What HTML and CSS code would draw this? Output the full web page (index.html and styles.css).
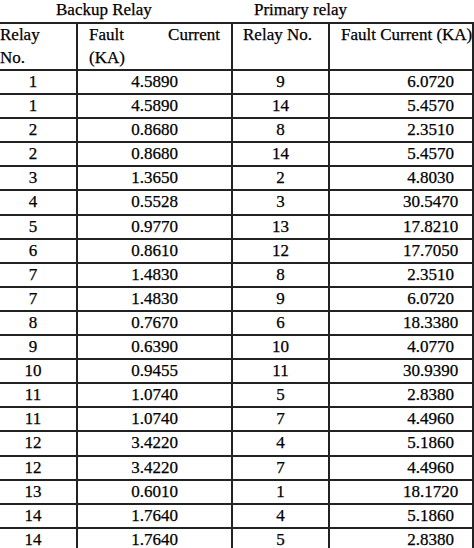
FILE: index.html
```html
<!DOCTYPE html>
<html>
<head>
<meta charset="utf-8">
<title>Backup and primary relay fault currents</title>
<link rel="stylesheet" href="styles.css">
</head>
<body>
<table class="relays">
  <colgroup>
    <col class="c1"><col class="c2"><col class="c3"><col class="c4">
  </colgroup>
  <thead>
    <tr class="title-row">
      <th colspan="2" class="title backup">Backup Relay</th>
      <th colspan="2" class="title primary">Primary relay</th>
    </tr>
    <tr class="head-row">
      <th class="h1">Relay<br>No.</th>
      <th class="h2"><div class="split"><span>Fault</span><span>Current</span></div><div>(KA)</div></th>
      <th class="h3">Relay No.</th>
      <th class="h4">Fault Current (KA)</th>
    </tr>
  </thead>
  <tbody>
    <tr><td class="d1">1</td><td class="d2">4.5890</td><td class="d3">9</td><td class="d4">6.0720</td></tr>
    <tr><td class="d1">1</td><td class="d2">4.5890</td><td class="d3">14</td><td class="d4">5.4570</td></tr>
    <tr><td class="d1">2</td><td class="d2">0.8680</td><td class="d3">8</td><td class="d4">2.3510</td></tr>
    <tr><td class="d1">2</td><td class="d2">0.8680</td><td class="d3">14</td><td class="d4">5.4570</td></tr>
    <tr><td class="d1">3</td><td class="d2">1.3650</td><td class="d3">2</td><td class="d4">4.8030</td></tr>
    <tr><td class="d1">4</td><td class="d2">0.5528</td><td class="d3">3</td><td class="d4">30.5470</td></tr>
    <tr><td class="d1">5</td><td class="d2">0.9770</td><td class="d3">13</td><td class="d4">17.8210</td></tr>
    <tr><td class="d1">6</td><td class="d2">0.8610</td><td class="d3">12</td><td class="d4">17.7050</td></tr>
    <tr><td class="d1">7</td><td class="d2">1.4830</td><td class="d3">8</td><td class="d4">2.3510</td></tr>
    <tr><td class="d1">7</td><td class="d2">1.4830</td><td class="d3">9</td><td class="d4">6.0720</td></tr>
    <tr><td class="d1">8</td><td class="d2">0.7670</td><td class="d3">6</td><td class="d4">18.3380</td></tr>
    <tr><td class="d1">9</td><td class="d2">0.6390</td><td class="d3">10</td><td class="d4">4.0770</td></tr>
    <tr><td class="d1">10</td><td class="d2">0.9455</td><td class="d3">11</td><td class="d4">30.9390</td></tr>
    <tr><td class="d1">11</td><td class="d2">1.0740</td><td class="d3">5</td><td class="d4">2.8380</td></tr>
    <tr><td class="d1">11</td><td class="d2">1.0740</td><td class="d3">7</td><td class="d4">4.4960</td></tr>
    <tr><td class="d1">12</td><td class="d2">3.4220</td><td class="d3">4</td><td class="d4">5.1860</td></tr>
    <tr><td class="d1">12</td><td class="d2">3.4220</td><td class="d3">7</td><td class="d4">4.4960</td></tr>
    <tr><td class="d1">13</td><td class="d2">0.6010</td><td class="d3">1</td><td class="d4">18.1720</td></tr>
    <tr><td class="d1">14</td><td class="d2">1.7640</td><td class="d3">4</td><td class="d4">5.1860</td></tr>
    <tr><td class="d1">14</td><td class="d2">1.7640</td><td class="d3">5</td><td class="d4">2.8380</td></tr>
  </tbody>
</table>
</body>
</html>
```

FILE: styles.css
```css
html, body {
  margin: 0;
  padding: 0;
  background: #ffffff;
  overflow: hidden;
}

body {
  font-family: "Liberation Serif", "Times New Roman", serif;
  font-size: 17px;
  color: #000000;
  -webkit-text-stroke: 0.25px #000000;
}

.relays {
  border-collapse: separate;
  border-spacing: 0;
  table-layout: fixed;
  width: 474px;
}

.c1 { width: 78px; }
.c2 { width: 155px; }
.c3 { width: 97px; }
.c4 { width: 144px; }

.relays th,
.relays td {
  padding: 0;
  font-weight: normal;
  box-sizing: border-box;
}

/* title row */
.title {
  height: 22px;
  line-height: 20px;
  vertical-align: top;
  text-align: left;
  white-space: nowrap;
  border: none;
}
.title.backup { padding-left: 56px; }
.title.primary { padding-left: 21px; }

/* header row */
.head-row th {
  border-top: 2px solid #222222;
  border-bottom: 2px solid #222222;
  border-right: 2px solid #222222;
  height: 49px;
  line-height: 22.5px;
  vertical-align: top;
}

.h1 { text-align: left; }
.h2 { text-align: left; padding-left: 11px !important; padding-right: 11px !important; }
.h3 { text-align: center; padding-right: 6px !important; }
.h4 { text-align: left; padding-left: 11px !important; white-space: nowrap; }

.split {
  display: flex;
  justify-content: space-between;
}

/* data rows */
.relays td {
  border-right: 2px solid #222222;
  border-bottom: 2px solid #222222;
  height: 24.1px;
  line-height: 22.1px;
  text-align: center;
  vertical-align: top;
  white-space: nowrap;
}

.relays td.d1 { padding-right: 10px; }
.relays td.d4 { padding-left: 59px; }
```
